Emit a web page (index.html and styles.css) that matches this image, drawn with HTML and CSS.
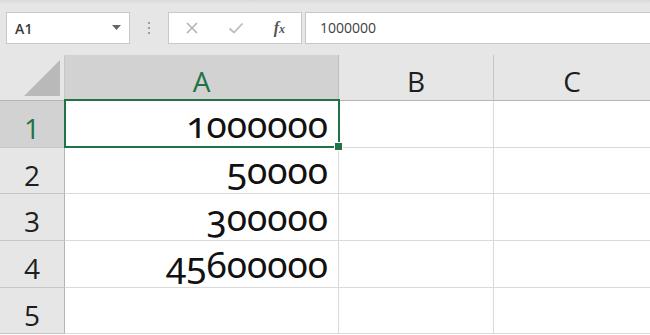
FILE: index.html
```html
<!DOCTYPE html>
<html>
<head>
<meta charset="utf-8">
<link rel="stylesheet" href="styles.css">
</head>
<body>
<div class="toolbar">
  <div class="namebox">
    <span class="name">A1</span>
    <svg class="caret" width="9" height="5" viewBox="0 0 9 5"><path d="M0 0 H9 L4.5 5 Z" fill="#666"/></svg>
  </div>
  <div class="dots"><i></i><i></i><i></i></div>
  <div class="fbtns">
    <svg class="ico" width="14" height="14" viewBox="0 0 14 14"><path d="M2 2 L12 12 M12 2 L2 12" stroke="#b4b4b4" stroke-width="1.6" fill="none"/></svg>
    <svg class="ico" width="16" height="14" viewBox="0 0 16 14"><path d="M1.5 7.5 L6 11.5 L14.5 2.5" stroke="#bdbdbd" stroke-width="1.8" fill="none"/></svg>
    <span class="fx">f<span class="fxx">x</span></span>
  </div>
  <div class="fbar">1000000</div>
</div>
<div class="sheet">
  <div class="corner"><svg width="38" height="38" viewBox="0 0 38 38"><path d="M37 1 V37 H1 Z" fill="#b9b9b9"/></svg></div>
  <div class="ch sel">A</div>
  <div class="ch">B</div>
  <div class="ch last">C</div>

  <div class="rh sel">1</div>
  <div class="cell active">1000000</div>
  <div class="cell"></div>
  <div class="cell last"></div>

  <div class="rh">2</div>
  <div class="cell">50000</div>
  <div class="cell"></div>
  <div class="cell last"></div>

  <div class="rh">3</div>
  <div class="cell">300000</div>
  <div class="cell"></div>
  <div class="cell last"></div>

  <div class="rh">4</div>
  <div class="cell">45600000</div>
  <div class="cell"></div>
  <div class="cell last"></div>

  <div class="rh">5</div>
  <div class="cell"></div>
  <div class="cell"></div>
  <div class="cell last"></div>
</div>
</body>
</html>
```
FILE: styles.css
```css
* { box-sizing: border-box; }
html, body { margin: 0; padding: 0; }
body {
  width: 650px;
  height: 335px;
  overflow: hidden;
  background: #fff;
  font-family: "Open Sans", "Noto Sans", sans-serif;
}
.toolbar {
  height: 55px;
  background: linear-gradient(#d9d9d9 0, #e6e6e6 4px, #e6e6e6 100%);
  display: flex;
  align-items: flex-start;
  padding: 12px 0 0 6px;
}
.namebox {
  width: 124px;
  height: 32px;
  background: #fff;
  border: 1px solid #c8c8c8;
  display: flex;
  align-items: center;
  justify-content: space-between;
  padding: 0 8px 0 8px;
}
.name {
  font-size: 14px;
  font-weight: 600;
  color: #3a3a3a;
  letter-spacing: 0.2px;
}
.caret { margin-top: -2px; }
.dots {
  width: 38px;
  height: 32px;
  display: flex;
  flex-direction: column;
  align-items: center;
  justify-content: center;
  gap: 3px;
}
.dots i {
  display: block;
  width: 2px;
  height: 2px;
  background: #9a9a9a;
}
.fbtns {
  width: 134px;
  height: 32px;
  background: #fff;
  border: 1px solid #c8c8c8;
  display: flex;
  align-items: center;
  padding: 0 16px 0 16px;
  justify-content: space-between;
}
.fx {
  font-family: "Liberation Serif", serif;
  font-style: italic;
  font-weight: bold;
  font-size: 16px;
  color: #555;
}
.fxx { font-size: 12px; }
.fbar {
  margin-left: 3px;
  flex: 1;
  height: 32px;
  background: #fff;
  border: 1px solid #c8c8c8;
  border-right: none;
  font-size: 14px;
  color: #404040;
  padding-left: 14px;
  line-height: 30px;
}
.sheet {
  display: grid;
  grid-template-columns: 65px 274px 155px 156px;
  grid-template-rows: 46px 47px 46px 47px 47px 46px;
}
.corner {
  background: #e6e6e6;
  border-right: 1px solid #c6c6c6;
  border-bottom: 1px solid #b5b5b5;
  display: flex;
  align-items: flex-end;
  justify-content: flex-end;
  padding: 0 3px 3px 0;
}
.ch {
  background: #e6e6e6;
  border-right: 1px solid #c6c6c6;
  border-bottom: 1px solid #b5b5b5;
  text-align: center;
  font-size: 28px;
  line-height: 38px;
  padding-top: 7px;
  color: #1e1e1e;
}
.ch.last { border-right: none; }
.ch.sel {
  background: #d2d2d2;
  color: #217346;
  border-right-color: #bdbdbd;
}
.rh {
  background: #e6e6e6;
  border-right: 1px solid #b5b5b5;
  border-bottom: 1px solid #c6c6c6;
  text-align: center;
  font-size: 28px;
  line-height: 38px;
  padding-top: 8px;
  color: #1e1e1e;
}
.rh.sel {
  background: #d2d2d2;
  color: #217346;
}
.cell {
  border-right: 1px solid #dadada;
  border-bottom: 1px solid #dadada;
  padding-right: 10px;
  font-family: "Noto Sans", sans-serif;
  font-variant-numeric: oldstyle-nums;
  font-size: 37px;
  line-height: 46px;
  color: #111;
  display: flex;
  align-items: flex-end;
  justify-content: flex-end;
}
.cell.last { border-right: none; }
.cell.active { position: relative; }
.cell.active::before {
  content: "";
  position: absolute;
  left: -1px;
  top: -2px;
  right: -2px;
  bottom: -1px;
  border: 2px solid #217346;
}
.cell.active::after {
  content: "";
  position: absolute;
  right: -5px;
  bottom: -4px;
  width: 7px;
  height: 7px;
  background: #217346;
  border: 1px solid #fff;
}
```
